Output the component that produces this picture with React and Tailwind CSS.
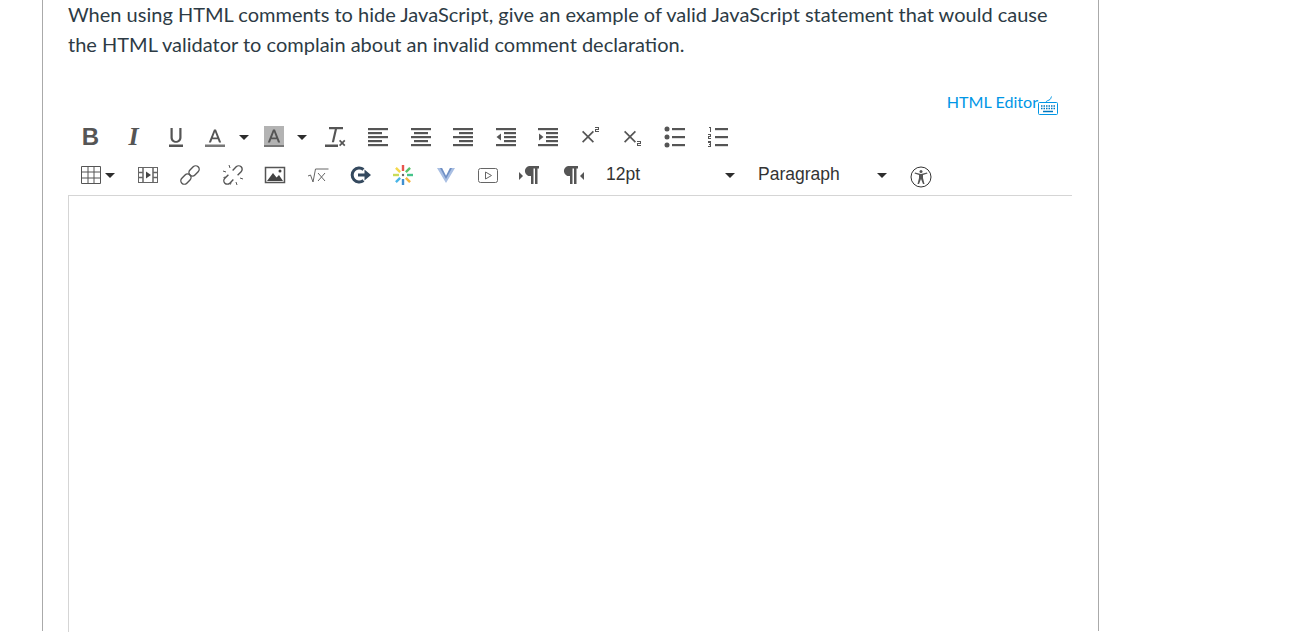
import React from 'react';

// Toolbar button: fixed-width slot with its icon centered
const Slot = ({ w, children }) => (
  <div className={`flex shrink-0 items-center justify-center ${w}`}>{children}</div>
);

const Caret = () => (
  <svg width="10" height="5" viewBox="0 0 10 5" fill="#2d2d2d"><path d="M0 0h10L5 5z" /></svg>
);

const Icon = ({ children, size = 22, fill = '#555' }) => (
  <svg width={size} height={size} viewBox="0 0 22 22" fill={fill}>{children}</svg>
);

// Stacked lines, x/width per line
const Lines = ({ rows, children }) => (
  <Icon>
    {rows.map(([x, y, w]) => <rect key={y} x={x} y={y} width={w} height="2.2" />)}
    {children}
  </Icon>
);

const AlignLeft = () => <Lines rows={[[1, 2, 20], [1, 6, 14], [1, 10, 20], [1, 14, 14], [1, 18, 20]]} />;
const AlignCenter = () => <Lines rows={[[1, 2, 20], [4, 6, 14], [1, 10, 20], [4, 14, 14], [1, 18, 20]]} />;
const AlignRight = () => <Lines rows={[[1, 2, 20], [7, 6, 14], [1, 10, 20], [7, 14, 14], [1, 18, 20]]} />;
const Outdent = () => (
  <Lines rows={[[1, 2, 20], [9, 6, 12], [9, 10, 12], [9, 14, 12], [1, 18, 20]]}>
    <path d="M6 7.500v7L1.500 11z" />
  </Lines>
);
const Indent = () => (
  <Lines rows={[[1, 2, 20], [9, 6, 12], [9, 10, 12], [9, 14, 12], [1, 18, 20]]}>
    <path d="M2 7.500v7L6.500 11z" />
  </Lines>
);

const Keyboard = () => (
  <svg width="20" height="19" viewBox="0 0 20 19" fill="none" stroke="#0096e6">
    <rect x="0.500" y="6.500" width="19" height="12" rx="1" />
    <path d="M8 6.500c0-2 3-2 4-3s1-2 1.500-3" />
    <path d="M3 10h14M3 12.500h14" strokeWidth="1.500" strokeDasharray="1.500 1" stroke="#0078c0" />
    <path d="M5 15.500h10" strokeWidth="1.500" stroke="#0078c0" />
  </svg>
);

const Spark = () => {
  const colors = ['#e8554e', '#59c36a', '#45c48a', '#f4b63f', '#3f8fd0', '#49b6e8', '#c9dc5a', '#f4d84a'];
  return (
    <Icon>
      {colors.map((c, i) => (
        <rect key={c} x="9.800" y="1" width="2.400" height="6" fill={c} transform={`rotate(${i * 45} 11 11)`} />
      ))}
      <circle cx="11" cy="11" r="1.200" fill="#666" />
    </Icon>
  );
};

const LetterA = () => <path d="M10 3.500h2l5.200 13h-2.200l-1.200-3.200H8.200L7 16.500H4.800zm-1.100 8h4.200L11 6z" />;

const App = () => (
  <div className="h-[632px] w-[1302px] overflow-hidden bg-white font-['Lato',sans-serif]">
    <div className="ml-[42px] h-full w-[1057px] border-x border-[#aaaaaa] pl-[25px]">
      <p className="-mt-[1px] w-[1004px] text-[20px] leading-[30px] text-[#2d3b45]">
        When using HTML comments to hide JavaScript, give an example of valid JavaScript statement that would cause the HTML validator to complain about an invalid comment declaration.
      </p>

      <div className="w-[1004px] pt-[33px]">
        <div className="flex h-[25px] items-start justify-end pr-[14px] text-[16.100px] leading-[20px] text-[#0096e6]">
          <span>HTML Editor</span>
          <span className="mt-[4px]"><Keyboard /></span>
        </div>

        {/* Toolbar row one */}
        <div className="mt-[1px] flex h-[38px] items-center pl-[1px] font-['Liberation_Sans',sans-serif] text-[#555]">
          <Slot w="w-[43px]"><span className="text-[24px] leading-none font-bold">B</span></Slot>
          <Slot w="w-[43px]"><span className="font-['Liberation_Serif',serif] text-[26px] leading-none font-bold italic">I</span></Slot>
          <Slot w="w-[42px]">
            <Icon>
              <path d="M5.500 2h2.200v9.500c0 4.500 6.600 4.500 6.600 0V2h2.200v9.500c0 7-11 7-11 0zM4 18.500h14V21H4z" />
            </Icon>
          </Slot>
          <Slot w="w-[36px]">
            <Icon>
              <LetterA />
              <rect x="1" y="18.500" width="20" height="2.500" fill="#777" />
            </Icon>
          </Slot>
          <Slot w="w-[22px]"><Caret /></Slot>
          <Slot w="w-[38px]">
            <Icon>
              <rect x="1" y="0" width="20" height="19" fill="#b3b3b3" />
              <LetterA />
              <rect x="1" y="19" width="20" height="2" fill="#777" />
            </Icon>
          </Slot>
          <Slot w="w-[18px]"><Caret /></Slot>
          <Slot w="w-[48px]">
            <Icon>
              <path d="M5 1h14v2.200h-6l-3 13H7.800l3-13H5zM1 18.500h13V21H1zM15 15l1.200-1.200 2 2 2-2L21.400 15l-2 2 2 2-1.200 1.200-2-2-2 2L15 19l2-2z" />
            </Icon>
          </Slot>
          <Slot w="w-[38px]"><AlignLeft /></Slot>
          <Slot w="ml-[2px] w-[43px]"><AlignCenter /></Slot>
          <Slot w="w-[42px]"><AlignRight /></Slot>
          <Slot w="w-[43px]"><Outdent /></Slot>
          <Slot w="w-[42px]"><Indent /></Slot>
          <Slot w="w-[42px]">
            <Icon>
              <path d="M3 6l1.200-1.200L9 9.500l4.800-4.700L15 6l-4.800 4.700L15 15.500l-1.200 1.200L9 12l-4.800 4.700L3 15.500l4.800-4.800z" />
              <path d="M16 1h4v3h-3v1h3v1h-4V3h3V2h-3z" />
            </Icon>
          </Slot>
          <Slot w="w-[42px]">
            <Icon>
              <path d="M3 6l1.200-1.200L9 9.500l4.800-4.700L15 6l-4.800 4.700L15 15.500l-1.200 1.200L9 12l-4.800 4.700L3 15.500l4.800-4.800z" />
              <path d="M16 15h4v3h-3v1h3v1h-4v-3h3v-1h-3z" />
            </Icon>
          </Slot>
          <Slot w="w-[44px]">
            <Icon>
              <circle cx="3" cy="3" r="2.500" />
              <circle cx="3" cy="11" r="2.500" />
              <circle cx="3" cy="19" r="2.500" />
              <rect x="8" y="2" width="13" height="2.200" />
              <rect x="8" y="10" width="13" height="2.200" />
              <rect x="8" y="18" width="13" height="2.200" />
            </Icon>
          </Slot>
          <Slot w="w-[42px]">
            <Icon>
              <path d="M2 1h2v5H3V2H2zM1 8h3v3H2v1h2v1H1v-3h2V9H1zM1 15h3v6H1v-1h2v-1H2v-1h1v-1H1z" />
              <rect x="8" y="2" width="13" height="2.200" />
              <rect x="8" y="10" width="13" height="2.200" />
              <rect x="8" y="18" width="13" height="2.200" />
            </Icon>
          </Slot>
        </div>

        {/* Toolbar row two */}
        <div className="mb-[1px] flex h-[38px] items-center font-['Liberation_Sans',sans-serif] text-[17.500px] text-[#333]">
          <Slot w="ml-[9px] w-[28px]">
            <Icon fill="none">
              <path d="M1.500 2.500h19v17h-19zM1.500 8h19M1.500 14h19M8 2.500v17M14 2.500v17" stroke="#555" />
            </Icon>
          </Slot>
          <Slot w="mr-[12px] w-[10px]"><Caret /></Slot>
          <Slot w="w-[42px]">
            <Icon fill="none">
              <rect x="1.500" y="3.500" width="19" height="15" stroke="#666" />
              <path d="M6 3.500v15M16 3.500v15M1.500 8.500H6M1.500 13.500H6M16 8.500h4.500M16 13.500h4.500" stroke="#666" strokeWidth="1.500" />
              <path d="M9 7.500v7l5-3.500z" fill="#444" />
            </Icon>
          </Slot>
          <Slot w="w-[42px]">
            <Icon fill="none">
              <g transform="rotate(-45 11 11)" stroke="#555" strokeWidth="1.400">
                <rect x="-0.500" y="7.500" width="11.500" height="7" rx="3.500" />
                <rect x="11" y="7.500" width="11.500" height="7" rx="3.500" />
              </g>
            </Icon>
          </Slot>
          <Slot w="w-[43px]">
            <Icon fill="none">
              <g transform="rotate(-45 11 11)" stroke="#555" strokeWidth="1.400">
                <path d="M8 7.500H3a3.500 3.500 0 0 0 0 7h5" />
                <path d="M14 7.500h5a3.500 3.500 0 0 1 0 7h-5" />
              </g>
              <path d="M7 1l1 3M1 7l3 1M15 21l-1-3M21 15l-3-1M1.500 13.500l2-.5M8.500 20.500l.5-2" stroke="#555" />
            </Icon>
          </Slot>
          <Slot w="w-[42px]">
            <Icon fill="none">
              <rect x="1.500" y="3.500" width="19" height="15" stroke="#555" strokeWidth="1.500" />
              <path d="M3 17l6-8 3.500 4.500L15 11l4 6z" fill="#444" />
              <circle cx="16" cy="7" r="1.500" fill="#444" />
            </Icon>
          </Slot>
          <Slot w="w-[43px]">
            <Icon fill="none">
              <path d="M1 12l2.500-1 2.500 7 2.500-13h13M11 9l7 8M18 9l-7 8" stroke="#666" />
            </Icon>
          </Slot>
          <Slot w="w-[43px]">
            <Icon fill="none">
              <path d="M13.500 5.500a7 7 0 1 0 0 11" stroke="#34495e" strokeWidth="3" />
              <path d="M8 9.500h6.500V5.500L21 11l-6.500 5.500v-4H8z" fill="#34495e" />
            </Icon>
          </Slot>
          <Slot w="w-[42px]"><Spark /></Slot>
          <Slot w="w-[43px]">
            <Icon fill="#a9bfe3">
              <path d="M2 4h5l4 8 4-8h5l-9 15z" />
              <path d="M7 4l4 8 4-8h2l-6 11L5 4z" fill="#6f8fc4" />
            </Icon>
          </Slot>
          <Slot w="w-[42px]">
            <Icon fill="none">
              <rect x="1.500" y="4.500" width="19" height="14" rx="2" stroke="#666" />
              <path d="M8.500 8l6 3.500-6 3.500z" stroke="#666" />
            </Icon>
          </Slot>
          <Slot w="w-[42px]">
            <Icon>
              <path d="M0 8l4 4-4 4zM10 2h10v2.500h-1.500V20H16V4.500h-1.500V20H12v-8a5 5 0 0 1-2-10z" />
            </Icon>
          </Slot>
          <Slot w="w-[43px]">
            <Icon>
              <path d="M6 2h10v2.500h-1.500V20H12V4.500h-1.500V20H8v-8a5 5 0 0 1-2-10zM22 8v8l-4-4z" />
            </Icon>
          </Slot>
          <div className="flex w-[141px] shrink-0 items-center justify-between pl-[12px]">
            <span className="mb-[2px]">12pt</span>
            <Caret />
          </div>
          <div className="flex w-[152px] shrink-0 items-center justify-between pl-[23px]">
            <span className="mb-[2px]">Paragraph</span>
            <Caret />
          </div>
          <Slot w="mt-[3px] w-[67px]">
            <Icon fill="none">
              <circle cx="11" cy="11" r="10" stroke="#333" />
              <circle cx="11" cy="5.500" r="1.500" fill="#555" />
              <path d="M4.500 7.500L9 9v3l-1.500 6h1.500L11 13l2 5h1.500L13 12V9l4.500-1.500L17 6.500l-6 1.500-6-1.500z" fill="#555" />
            </Icon>
          </Slot>
        </div>

        {/* Editor area */}
        <div className="h-[440px] border-t border-l border-[#d5d5d5]" />
      </div>
    </div>
  </div>
);

export default App;
